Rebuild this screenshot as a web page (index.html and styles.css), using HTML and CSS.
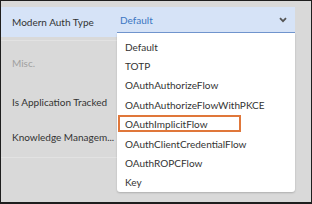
FILE: index.html
```html
<!DOCTYPE html>
<html>
<head>
    <title>Modern Auth Type</title>
    <link rel="stylesheet" href="styles.css">
</head>
<body>
    <div class="frame">
        <div class="form">
            <div class="row row-active">
                <div class="label">Modern Auth Type</div>
                <div class="select">
                    <span class="value">Default</span>
                    <svg class="chevron" width="8" height="6" viewBox="0 0 8 6">
                        <polyline points="1,1.2 4,4.2 7,1.2" fill="none" stroke="#555" stroke-width="1.8"/>
                    </svg>
                    <div class="dropdown">
                        <div class="option">Default</div>
                        <div class="option">TOTP</div>
                        <div class="option">OAuthAuthorizeFlow</div>
                        <div class="option">OAuthAuthorizeFlowWithPKCE</div>
                        <div class="option">OAuthImplicitFlow</div>
                        <div class="option">OAuthClientCredentialFlow</div>
                        <div class="option">OAuthROPCFlow</div>
                        <div class="option">Key</div>
                        <div class="mark"></div>
                    </div>
                </div>
            </div>
            <div class="divider"></div>
            <div class="row row-section">
                <div class="label muted">Misc.</div>
            </div>
            <div class="row">
                <div class="label">Is Application Tracked</div>
            </div>
            <div class="row">
                <div class="label">Knowledge Managem...</div>
            </div>
            <div class="divider"></div>
        </div>
    </div>
</body>
</html>
```

FILE: styles.css
```css
body {
    margin: 0;
    padding: 0;
    font-family: Lato, "Open Sans", sans-serif;
    font-size: 10px;
    color: #333333;
}

.frame {
    position: relative;
    width: 312px;
    height: 204px;
    box-sizing: border-box;
    border: 1px solid #1e1e1e;
    border-bottom-width: 2px;
    background-color: #d9d9d9;
    overflow: hidden;
}

.form {
    width: 294px;
    padding-top: 6px;
}

.row {
    display: flex;
    height: 35px;
}

.row-active {
    height: 30px;
    background-color: #d6e3f7;
}

.row-section {
    height: 43px;
}

.label {
    width: 116px;
    padding-left: 11px;
    box-sizing: border-box;
    display: flex;
    align-items: center;
    white-space: nowrap;
}

.muted {
    color: #a0a0a0;
}

.divider {
    height: 1px;
    margin-top: 9px;
    background-color: #e2e2e2;
}

.row + .divider {
    margin-top: 3px;
}

.select {
    position: relative;
    flex: 1;
    height: 25px;
    display: flex;
    align-items: center;
    justify-content: space-between;
    padding: 0 8px 0 3px;
    border-bottom: 1px solid #7196cf;
}

.value {
    color: #3a76c2;
}

.chevron {
    display: block;
}

.dropdown {
    position: absolute;
    top: calc(100% + 1px);
    left: 0;
    width: 178px;
    height: 159px;
    box-sizing: border-box;
    padding-top: 4px;
    background-color: #ffffff;
    border-radius: 0 0 3px 3px;
    box-shadow: 0 1px 2px rgba(0, 0, 0, 0.2);
}

.option {
    height: 19.4px;
    display: flex;
    align-items: center;
    padding-left: 8px;
}

.mark {
    position: absolute;
    left: 1px;
    top: 82px;
    width: 123px;
    height: 17px;
    box-sizing: border-box;
    border: 2px solid #e0773a;
}
```
